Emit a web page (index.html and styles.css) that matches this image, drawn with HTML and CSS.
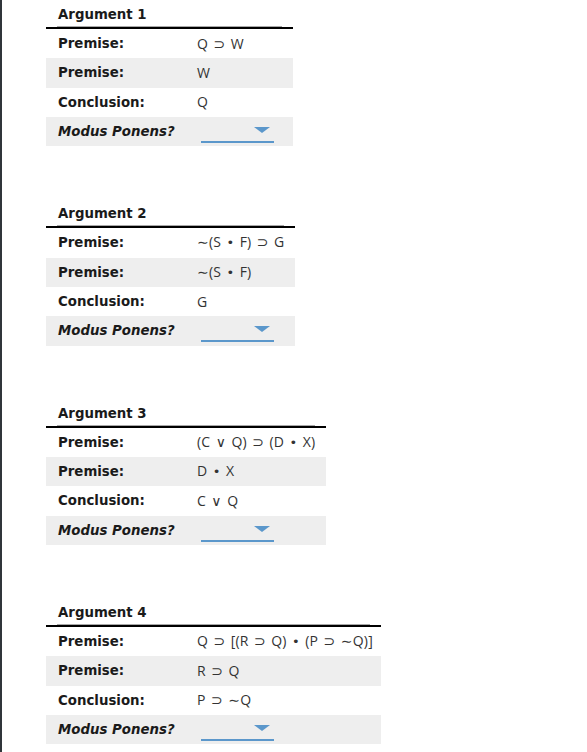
FILE: index.html
```html
<!DOCTYPE html>
<html lang="en">
<head>
<meta charset="utf-8">
<title>Modus Ponens</title>
<link rel="stylesheet" href="styles.css">
</head>
<body>
<div class="page">
  <section class="arg arg-1">
    <div class="caption">Argument 1</div>
    <div class="rows">
      <div class="row"><span class="label">Premise:</span><span class="value">Q ⊃ W</span></div>
      <div class="row alt"><span class="label">Premise:</span><span class="value">W</span></div>
      <div class="row"><span class="label">Conclusion:</span><span class="value">Q</span></div>
      <div class="row alt"><span class="label q">Modus Ponens?</span><span class="answer"><span class="select"><svg class="caret" width="16" height="6" viewBox="0 0 16 6"><polygon points="0,0 16,0 8,6"/></svg></span></span></div>
    </div>
  </section>
  <section class="arg arg-2">
    <div class="caption">Argument 2</div>
    <div class="rows">
      <div class="row"><span class="label">Premise:</span><span class="value">∼(S <span class="dot">•</span> F) ⊃ G</span></div>
      <div class="row alt"><span class="label">Premise:</span><span class="value">∼(S <span class="dot">•</span> F)</span></div>
      <div class="row"><span class="label">Conclusion:</span><span class="value">G</span></div>
      <div class="row alt"><span class="label q">Modus Ponens?</span><span class="answer"><span class="select"><svg class="caret" width="16" height="6" viewBox="0 0 16 6"><polygon points="0,0 16,0 8,6"/></svg></span></span></div>
    </div>
  </section>
  <section class="arg arg-3">
    <div class="caption">Argument 3</div>
    <div class="rows">
      <div class="row"><span class="label">Premise:</span><span class="value">(C ∨ Q) ⊃ (D <span class="dot">•</span> X)</span></div>
      <div class="row alt"><span class="label">Premise:</span><span class="value">D <span class="dot">•</span> X</span></div>
      <div class="row"><span class="label">Conclusion:</span><span class="value">C ∨ Q</span></div>
      <div class="row alt"><span class="label q">Modus Ponens?</span><span class="answer"><span class="select"><svg class="caret" width="16" height="6" viewBox="0 0 16 6"><polygon points="0,0 16,0 8,6"/></svg></span></span></div>
    </div>
  </section>
  <section class="arg arg-4">
    <div class="caption">Argument 4</div>
    <div class="rows">
      <div class="row"><span class="label">Premise:</span><span class="value">Q ⊃ [(R ⊃ Q) <span class="dot">•</span> (P ⊃ ∼Q)]</span></div>
      <div class="row alt"><span class="label">Premise:</span><span class="value">R ⊃ Q</span></div>
      <div class="row"><span class="label">Conclusion:</span><span class="value">P ⊃ ∼Q</span></div>
      <div class="row alt"><span class="label q">Modus Ponens?</span><span class="answer"><span class="select"><svg class="caret" width="16" height="6" viewBox="0 0 16 6"><polygon points="0,0 16,0 8,6"/></svg></span></span></div>
    </div>
  </section>
</div>
</body>
</html>
```
FILE: styles.css
```css
html, body {
  margin: 0;
  padding: 0;
  background: #ffffff;
}
.page {
  min-height: 752px;
  box-sizing: border-box;
  border-left: 2px solid #30353a;
  padding-left: 44px;
  display: flex;
  flex-direction: column;
  gap: 53px;
  font-family: "DejaVu Sans", Verdana, sans-serif;
  color: #1a1a1a;
}
.arg-1 { width: 247px; }
.arg-2 { width: 249px; }
.arg-3 { width: 280px; }
.arg-4 { width: 335px; }
.caption {
  margin: 0 11px;
  padding: 7px 0 3px 1px;
  font-size: 13.33px;
  line-height: 16px;
  font-weight: bold;
  border-bottom: 1px solid #a8a8a8;
}
.rows {
  border-top: 2px solid #000;
}
.row {
  display: grid;
  grid-template-columns: 151px 1fr;
  align-items: center;
  height: 29.33px;
}
.row.alt {
  background: #eeeeee;
}
.label {
  padding-left: 12px;
  font-size: 13.33px;
  font-weight: bold;
  white-space: nowrap;
}
.label.q {
  font-style: italic;
}
.value {
  display: block;
  font-family: "Open Sans", "DejaVu Sans", sans-serif;
  font-size: 14px;
  line-height: 18px;
  word-spacing: 1.5px;
  letter-spacing: 0.2px;
  color: #333;
  white-space: nowrap;
}
.dot {
  font-family: "DejaVu Sans", sans-serif;
  font-size: 13px;
}
.answer {
  display: flex;
  align-items: center;
}
.select {
  margin-left: 4px;
  margin-top: 6px;
  width: 73px;
  height: 17px;
  box-sizing: border-box;
  border-bottom: 2px solid #5b97cb;
  display: flex;
  justify-content: flex-end;
  align-items: flex-start;
  padding-right: 4px;
}
.caret {
  display: block;
  fill: #5b97cb;
  margin-top: 1px;
}
```
